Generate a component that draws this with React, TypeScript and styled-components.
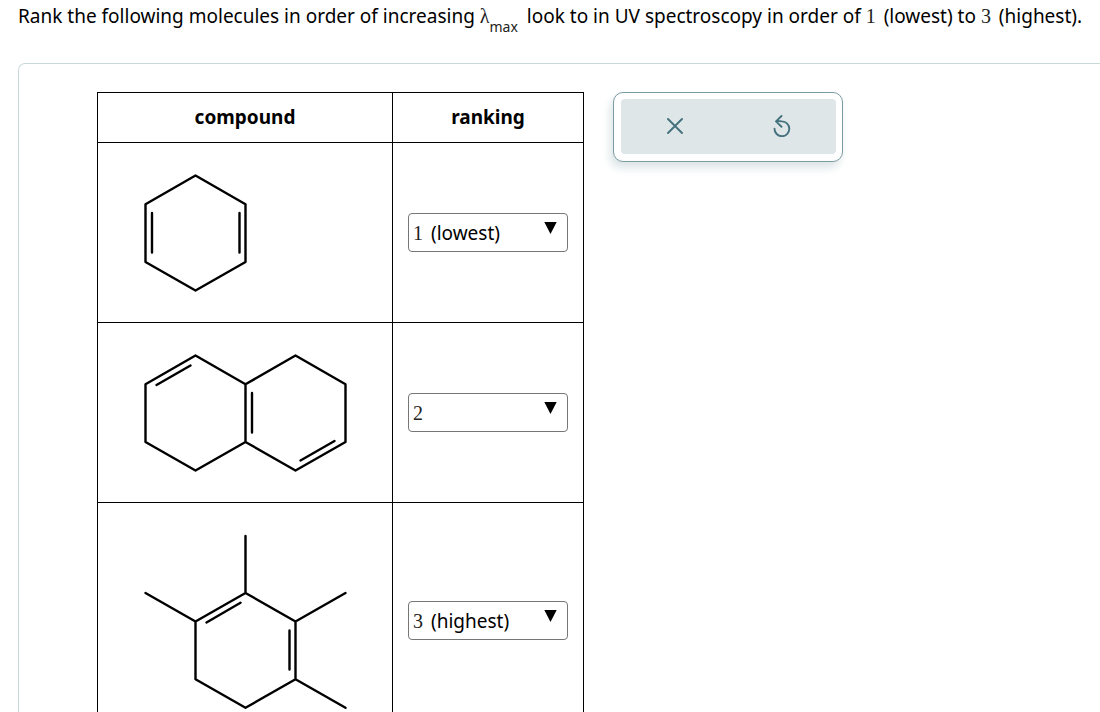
import React, { useState } from "react";
import styled, { createGlobalStyle } from "styled-components";

const GlobalStyle = createGlobalStyle`
  * { box-sizing: border-box; }
  body {
    margin: 0;
    background: #fff;
    color: #000;
    font: 19px/24px "Noto Sans", "Open Sans", sans-serif;
    overflow-x: hidden;
  }
`;

const Page = styled.main`
  padding: 4px 0 24px 18px;
`;

const Question = styled.p`
  margin: 0;
  min-height: 59px;
`;

const Num = styled.span`
  margin-right: 3px;
  font-family: "Liberation Serif", serif;
  font-size: 20px;
  line-height: 20px;
  color: #222;
`;

const Lambda = styled(Num)`
  margin-right: 0;
`;

const Sub = styled.sub`
  font-size: 14px;
  line-height: 0;
  vertical-align: -9px;
  margin-right: 4px;
  color: #222;
`;

const Panel = styled.section`
  display: flex;
  align-items: flex-start;
  gap: 29px;
  padding: 28px 0 28px 78px;
  border: 1px solid #c8d9d9;
  border-right: 0;
  border-radius: 7px 0 0 7px;
`;

const Table = styled.table`
  border-collapse: collapse;
`;

const HeadCell = styled.th`
  height: 50px;
  padding: 0 0 2px;
  border: 1px solid #000;
  font-weight: 700;
`;

const Cell = styled.td`
  padding: 30px 15px;
  border: 1px solid #000;
  line-height: 0;
`;

const Drawing = styled.svg`
  display: block;
  width: 264px;
  overflow: visible;
  fill: none;
  stroke: #000;
  stroke-width: 2.4;
  stroke-linecap: round;
  stroke-linejoin: round;
`;

const Picker = styled.div`
  display: grid;
  width: 160px;
  height: 39px;
  line-height: 24px;

  > * { grid-area: 1 / 1; }
`;

const Select = styled.select`
  appearance: none;
  width: 100%;
  height: 100%;
  padding: 0 4px;
  border: 1px solid #767676;
  border-radius: 4px;
  background: #fff;
  color: transparent;
  font: inherit;
  cursor: pointer;

  option { color: #000; }
`;

const Shown = styled.span`
  display: flex;
  justify-content: space-between;
  padding: 8px 11px 0 5px;
  pointer-events: none;
  z-index: 1;
`;

const Arrow = styled.svg`
  width: 13px;
  height: 12px;
  margin-top: 1px;
`;

const Toolbar = styled.div`
  width: 230px;
  height: 70px;
  padding: 6px 6px 7px 7px;
  border: 1px solid #7b9ba5;
  border-radius: 10px;
  background: #fff;
  box-shadow: -3px 6px 8px #dde5e7;
`;

const Tools = styled.div`
  display: grid;
  grid-template-columns: 1fr 1fr;
  height: 100%;
  padding-bottom: 1px;
  border-radius: 4px;
  background: #dfe6e8;
`;

const Tool = styled.button`
  display: flex;
  align-items: center;
  justify-content: center;
  padding: 0;
  border: 0;
  background: none;
  cursor: pointer;

  svg {
    fill: none;
    stroke: #44717e;
    stroke-width: 1.9;
    stroke-linecap: round;
    stroke-linejoin: round;
  }
`;

const ranks = [
  { digit: "1", note: "(lowest)" },
  { digit: "2", note: "" },
  { digit: "3", note: "(highest)" },
];

const compounds = [
  {
    name: "1,4-cyclohexadiene",
    height: 119,
    path: "M82.5 2.5 L132.5 31.3 V89 L82.5 117.5 L32.5 89 V31.3 Z M39 40 V79.5 M126.5 40 V79.5",
  },
  {
    name: "hexahydronaphthalene",
    height: 119,
    path: "M82.5 2.5 L132.5 31.3 V89 L82.5 117.5 L32.5 89 V31.3 Z M132.5 31.3 L182.5 2.5 L232.5 31.3 V89 L182.5 117.5 L132.5 89 M139 40 V79.5 M43.5 32 L77.5 12.5 M187.5 107.5 L221.5 88",
  },
  {
    name: "tetramethylcyclohexadiene",
    height: 175,
    path: "M132.5 60 L182.5 88.5 V146.3 L132.5 174.8 L82.5 146.3 V88.5 Z M132.5 60 V3 M82.5 88.5 L32.5 60 M182.5 88.5 L232.5 60 M182.5 146.3 L232.5 174.8 M93.5 89.5 L127.5 69.7 M176.5 97.5 V136.5",
  },
];

function RankPicker({ initial, label }: { initial: number; label: string }) {
  const [value, setValue] = useState(initial);
  const rank = ranks[value];
  return (
    <Picker>
      <Select
        aria-label={label}
        value={value}
        onChange={(e) => setValue(Number(e.target.value))}
      >
        {ranks.map((r, i) => (
          <option key={r.digit} value={i}>
            {r.digit} {r.note}
          </option>
        ))}
      </Select>
      <Shown aria-hidden="true">
        <span>
          <Num>{rank.digit}</Num> {rank.note}
        </span>
        <Arrow viewBox="0 0 13 12">
          <path d="M0.3 0 H12.7 L6.5 12 Z" />
        </Arrow>
      </Shown>
    </Picker>
  );
}

export default function App() {
  return (
    <>
      <GlobalStyle />
      <Page>
        <Question>
          Rank the following molecules in order of increasing <Lambda>λ</Lambda>
          <Sub>max</Sub> look to in UV spectroscopy in order of <Num>1</Num> (lowest) to{" "}
          <Num>3</Num> (highest).
        </Question>
        <Panel>
          <Table>
            <thead>
              <tr>
                <HeadCell scope="col">compound</HeadCell>
                <HeadCell scope="col">ranking</HeadCell>
              </tr>
            </thead>
            <tbody>
              {compounds.map((c, i) => (
                <tr key={c.name}>
                  <Cell>
                    <Drawing
                      role="img"
                      aria-label={c.name}
                      height={c.height}
                      viewBox={`0 0 264 ${c.height}`}
                    >
                      <path d={c.path} />
                    </Drawing>
                  </Cell>
                  <Cell>
                    <RankPicker initial={i} label={`Ranking of ${c.name}`} />
                  </Cell>
                </tr>
              ))}
            </tbody>
          </Table>
          <Toolbar>
            <Tools>
              <Tool aria-label="Clear">
                <svg width="16" height="16" viewBox="0 0 16 16">
                  <path d="M1 1 L15 15 M15 1 L1 15" />
                </svg>
              </Tool>
              <Tool aria-label="Reset">
                <svg width="18" height="22" viewBox="0 0 18 22">
                  <path d="M1.5 13.8 A7.4 7.4 0 1 0 9 6.4 C7 6 5 6 3 6.4 M8.5 1 L3 6.4 L8.5 11.8" />
                </svg>
              </Tool>
            </Tools>
          </Toolbar>
        </Panel>
      </Page>
    </>
  );
}
